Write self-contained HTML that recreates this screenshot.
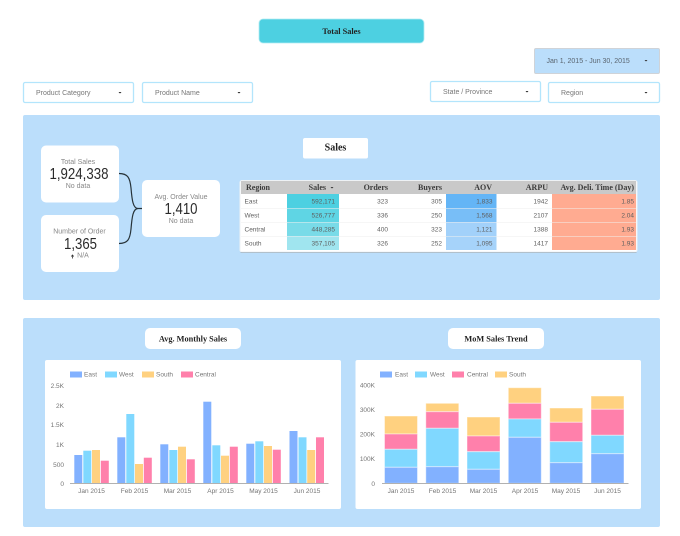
<!DOCTYPE html>
<html><head><meta charset="utf-8">
<style>
html,body{margin:0;padding:0;background:#fff}
body{width:680px;height:536px;overflow:hidden;position:relative}
svg{position:absolute;left:0;top:0;filter:blur(.35px)}
text{font-family:"Liberation Sans",sans-serif;fill:#757575}
.t{font-family:"Liberation Serif",serif;font-weight:bold;fill:#222}
.c{fill:#5f5f5f;font-size:6.5px;text-anchor:end}
.h{font-family:"Liberation Serif",serif;font-weight:bold;fill:#3c3c3c;font-size:8px;text-anchor:end}
.dd{fill:#fff;stroke:#b3e5fc;stroke-width:1.3}
.ddt{font-size:7px;fill:#777}
.ax{font-size:6.5px;fill:#757575;text-anchor:end}
.mo{font-size:6.5px;fill:#757575;text-anchor:middle}
.lg{font-size:6.5px;fill:#777}
.lab{font-size:7px;fill:#888;text-anchor:middle}
.val{font-size:15.5px;fill:#2a2a2a}
.sub{font-size:7px;fill:#888;text-anchor:middle}
.E{fill:#82b1ff}.W{fill:#80d8ff}.S{fill:#ffd180}.C{fill:#ff80ab}
.st rect{stroke:#fff;stroke-opacity:.45;stroke-width:1}
</style></head><body>
<svg width="680" height="536" viewBox="0 0 680 536" xmlns="http://www.w3.org/2000/svg">
<!-- header -->
<rect x="259" y="19" width="165" height="24" rx="4" fill="#4dd0e1" stroke="#b2ebf2" stroke-width=".8"/>
<text class="t" x="341.500" y="34" font-size="8.300" text-anchor="middle">Total Sales</text>
<rect x="534.500" y="48.500" width="125" height="25" rx="1.500" fill="#bbdefb" stroke="#cfd3d8" stroke-width="1"/>
<text x="546.500" y="63" font-size="7" style="fill:#5a6570">Jan 1, 2015 - Jun 30, 2015</text>
<path d="M644.500 60h3l-1.500 1.500z" fill="#333"/>
<!-- dropdowns -->
<rect class="dd" x="23.500" y="82.500" width="110" height="20" rx="1.500"/>
<text class="ddt" x="36" y="95">Product Category</text><path d="M118.500 92h3l-1.500 1.500z" fill="#222"/>
<rect class="dd" x="142.500" y="82.500" width="110" height="20" rx="1.500"/>
<text class="ddt" x="155" y="95">Product Name</text><path d="M237.500 92h3l-1.500 1.500z" fill="#222"/>
<rect class="dd" x="430.500" y="81.500" width="110" height="20" rx="1.500"/>
<text class="ddt" x="443" y="94">State / Province</text><path d="M525.500 91h3l-1.500 1.500z" fill="#222"/>
<rect class="dd" x="548.500" y="82.500" width="111" height="20" rx="1.500"/>
<text class="ddt" x="561" y="95">Region</text><path d="M644.500 92h3l-1.500 1.500z" fill="#222"/>
<!-- panel 1 -->
<rect x="23" y="115" width="637" height="185" rx="2" fill="#bbdefb"/>
<rect x="303" y="138" width="65" height="20.500" rx="2" fill="#fff"/>
<text class="t" x="335.500" y="150.500" font-size="10" text-anchor="middle">Sales</text>
<!-- scorecards -->
<path d="M119 173.500C128 173.500 130 178 131 188C132 200 133 208.500 138 208.500M119 243.500C128 243.500 130 239 131 229C132 217 133 208.500 138 208.500M138 208.500H142" fill="none" stroke="#263238" stroke-width="1.200"/>
<rect x="41" y="145.500" width="78" height="57" rx="5" fill="#fff"/>
<text class="lab" x="78" y="164">Total Sales</text>
<text class="val" x="49.500" y="179" textLength="59" lengthAdjust="spacingAndGlyphs">1,924,338</text>
<text class="sub" x="78" y="188">No data</text>
<rect x="41" y="215" width="78" height="57" rx="5" fill="#fff"/>
<text class="lab" x="79.500" y="233.500">Number of Order</text>
<text class="val" x="64" y="249" textLength="33" lengthAdjust="spacingAndGlyphs">1,365</text>
<path d="M72.500 258.500v-3M71.300 256.500l1.200-1.500 1.200 1.500" stroke="#333" stroke-width=".8" fill="none"/>
<text class="sub" x="83" y="257.500">N/A</text>
<rect x="142" y="180" width="78" height="57" rx="5" fill="#fff"/>
<text class="lab" x="181" y="199">Avg. Order Value</text>
<text class="val" x="164.500" y="214" textLength="33" lengthAdjust="spacingAndGlyphs">1,410</text>
<text class="sub" x="181" y="223">No data</text>
<!-- table -->
<rect x="240" y="180.500" width="397" height="71.500" rx="2" fill="#fff" stroke="#eef2f5" stroke-width="1"/>
<rect x="240.500" y="252" width="396" height="1" fill="#9aa5ae" opacity=".6"/>
<rect x="241" y="181" width="395" height="13" fill="#c9c9c9"/>
<g stroke="#f0f0f0" stroke-width=".7"><path d="M241 208.300H636M241 222.300H636M241 236.300H636"/></g>
<rect x="287" y="194" width="52" height="14" fill="#4dd0e1"/>
<rect x="287" y="208.500" width="52" height="13.500" fill="#5fd5e4"/>
<rect x="287" y="222.500" width="52" height="13.500" fill="#79dbe8"/>
<rect x="287" y="236.500" width="52" height="13.500" fill="#a0e5ef"/>
<rect x="446" y="194" width="50.500" height="14" fill="#64b5f6"/>
<rect x="446" y="208.500" width="50.500" height="13.500" fill="#78bef7"/>
<rect x="446" y="222.500" width="50.500" height="13.500" fill="#a2d1fa"/>
<rect x="446" y="236.500" width="50.500" height="13.500" fill="#a6d3fa"/>
<rect x="552" y="194" width="84" height="14" fill="#ffab91"/>
<rect x="552" y="208.500" width="84" height="13.500" fill="#ffab91"/>
<rect x="552" y="222.500" width="84" height="13.500" fill="#ffab91"/>
<rect x="552" y="236.500" width="84" height="13.500" fill="#ffab91"/>
<text class="h" x="270" y="190">Region</text>
<text class="h" x="326" y="190">Sales</text><path d="M330.500 187h3l-1.500 1.500z" fill="#333"/>
<text class="h" x="388" y="190">Orders</text>
<text class="h" x="442" y="190">Buyers</text>
<text class="h" x="492" y="190">AOV</text>
<text class="h" x="548" y="190">ARPU</text>
<text class="h" x="634" y="190">Avg. Deli. Time (Day)</text>
<g>
<text class="c" x="244.500" y="203.500" style="text-anchor:start">East</text>
<text class="c" x="335" y="203.500">592,171</text><text class="c" x="388" y="203.500">323</text><text class="c" x="442" y="203.500">305</text><text class="c" x="492.500" y="203.500">1,833</text><text class="c" x="548" y="203.500">1942</text><text class="c" x="634" y="203.500">1.85</text>
<text class="c" x="244.500" y="217.500" style="text-anchor:start">West</text>
<text class="c" x="335" y="217.500">526,777</text><text class="c" x="388" y="217.500">336</text><text class="c" x="442" y="217.500">250</text><text class="c" x="492.500" y="217.500">1,568</text><text class="c" x="548" y="217.500">2107</text><text class="c" x="634" y="217.500">2.04</text>
<text class="c" x="244.500" y="231.500" style="text-anchor:start">Central</text>
<text class="c" x="335" y="231.500">448,285</text><text class="c" x="388" y="231.500">400</text><text class="c" x="442" y="231.500">323</text><text class="c" x="492.500" y="231.500">1,121</text><text class="c" x="548" y="231.500">1388</text><text class="c" x="634" y="231.500">1.93</text>
<text class="c" x="244.500" y="245.500" style="text-anchor:start">South</text>
<text class="c" x="335" y="245.500">357,105</text><text class="c" x="388" y="245.500">326</text><text class="c" x="442" y="245.500">252</text><text class="c" x="492.500" y="245.500">1,095</text><text class="c" x="548" y="245.500">1417</text><text class="c" x="634" y="245.500">1.93</text>
</g>
<!-- panel 2 -->
<rect x="23" y="318" width="637" height="209" rx="2" fill="#bbdefb"/>
<rect x="145" y="328" width="96" height="21" rx="5" fill="#fff"/>
<text class="t" x="193" y="341.500" font-size="8.300" text-anchor="middle">Avg. Monthly Sales</text>
<rect x="448" y="328" width="96" height="21" rx="5" fill="#fff"/>
<text class="t" x="496" y="341.500" font-size="8.300" text-anchor="middle">MoM Sales Trend</text>
<!-- chart 1 -->
<rect x="45" y="360" width="296" height="149" rx="2" fill="#fff"/>
<rect class="E" x="70" y="371.500" width="12" height="6"/><text class="lg" x="84" y="376.500">East</text>
<rect class="W" x="105" y="371.500" width="12" height="6"/><text class="lg" x="119" y="376.500">West</text>
<rect class="S" x="142" y="371.500" width="12" height="6"/><text class="lg" x="156" y="376.500">South</text>
<rect class="C" x="181" y="371.500" width="12" height="6"/><text class="lg" x="195" y="376.500">Central</text>
<text class="ax" x="64" y="388">2.5K</text><text class="ax" x="64" y="408">2K</text><text class="ax" x="64" y="427">1.5K</text><text class="ax" x="64" y="447">1K</text><text class="ax" x="64" y="467">500</text><text class="ax" x="64" y="486">0</text>
<g>
<rect class="E" x="74.300" y="455" width="8" height="28.500"/><rect class="W" x="83.300" y="450.700" width="8" height="32.800"/><rect class="S" x="92" y="450" width="8" height="33.500"/><rect class="C" x="100.800" y="460.700" width="8" height="22.800"/>
<rect class="E" x="117.300" y="437.300" width="8" height="46.200"/><rect class="W" x="126.300" y="414" width="8" height="69.500"/><rect class="S" x="135" y="464" width="8" height="19.500"/><rect class="C" x="143.800" y="457.700" width="8" height="25.800"/>
<rect class="E" x="160.300" y="444.300" width="8" height="39.200"/><rect class="W" x="169.300" y="450" width="8" height="33.500"/><rect class="S" x="178" y="446.700" width="8" height="36.800"/><rect class="C" x="186.800" y="459.300" width="8" height="24.200"/>
<rect class="E" x="203.300" y="401.700" width="8" height="81.800"/><rect class="W" x="212.300" y="445.300" width="8" height="38.200"/><rect class="S" x="221" y="455.700" width="8" height="27.800"/><rect class="C" x="229.800" y="446.700" width="8" height="36.800"/>
<rect class="E" x="246.300" y="443.700" width="8" height="39.800"/><rect class="W" x="255.300" y="441.300" width="8" height="42.200"/><rect class="S" x="264" y="446" width="8" height="37.500"/><rect class="C" x="272.800" y="449.700" width="8" height="33.800"/>
<rect class="E" x="289.500" y="431" width="8" height="52.500"/><rect class="W" x="298.500" y="437.300" width="8" height="46.200"/><rect class="S" x="307.200" y="450" width="8" height="33.500"/><rect class="C" x="316" y="437.300" width="8" height="46.200"/>
</g>
<rect x="70" y="483" width="258.500" height=".8" fill="#9e9e9e"/>
<text class="mo" x="91.500" y="493">Jan 2015</text><text class="mo" x="134.500" y="493">Feb 2015</text><text class="mo" x="177.500" y="493">Mar 2015</text><text class="mo" x="220.500" y="493">Apr 2015</text><text class="mo" x="263.500" y="493">May 2015</text><text class="mo" x="307" y="493">Jun 2015</text>
<!-- chart 2 -->
<rect x="355.500" y="360" width="285.500" height="149" rx="2" fill="#fff"/>
<rect class="E" x="380" y="371.500" width="12" height="6"/><text class="lg" x="395" y="376.500">East</text>
<rect class="W" x="415" y="371.500" width="12" height="6"/><text class="lg" x="430" y="376.500">West</text>
<rect class="C" x="452" y="371.500" width="12" height="6"/><text class="lg" x="467" y="376.500">Central</text>
<rect class="S" x="495" y="371.500" width="12" height="6"/><text class="lg" x="509" y="376.500">South</text>
<text class="ax" x="375" y="387.500">400K</text><text class="ax" x="375" y="412">300K</text><text class="ax" x="375" y="436.500">200K</text><text class="ax" x="375" y="461">100K</text><text class="ax" x="375" y="486">0</text>
<g class="st">
<rect class="S" x="384.500" y="416" width="33" height="18"/><rect class="C" x="384.500" y="434" width="33" height="15.300"/><rect class="W" x="384.500" y="449.300" width="33" height="18"/><rect class="E" x="384.500" y="467.300" width="33" height="16"/>
<rect class="S" x="425.800" y="403.300" width="33" height="8.400"/><rect class="C" x="425.800" y="411.700" width="33" height="16.600"/><rect class="W" x="425.800" y="428.300" width="33" height="38.400"/><rect class="E" x="425.800" y="466.700" width="33" height="16.600"/>
<rect class="S" x="467" y="417" width="33" height="19"/><rect class="C" x="467" y="436" width="33" height="15.700"/><rect class="W" x="467" y="451.700" width="33" height="17.600"/><rect class="E" x="467" y="469.300" width="33" height="14"/>
<rect class="S" x="508.300" y="387.700" width="33" height="15.600"/><rect class="C" x="508.300" y="403.300" width="33" height="15.700"/><rect class="W" x="508.300" y="419" width="33" height="18.300"/><rect class="E" x="508.300" y="437.300" width="33" height="46"/>
<rect class="S" x="549.700" y="408" width="33" height="14.300"/><rect class="C" x="549.700" y="422.300" width="33" height="19.400"/><rect class="W" x="549.700" y="441.700" width="33" height="21"/><rect class="E" x="549.700" y="462.700" width="33" height="20.600"/>
<rect class="S" x="591" y="396" width="33" height="13.300"/><rect class="C" x="591" y="409.300" width="33" height="26"/><rect class="W" x="591" y="435.300" width="33" height="18.400"/><rect class="E" x="591" y="453.700" width="33" height="29.600"/>
</g>
<rect x="382" y="483" width="246.500" height=".8" fill="#9e9e9e"/>
<text class="mo" x="401" y="493">Jan 2015</text><text class="mo" x="442.500" y="493">Feb 2015</text><text class="mo" x="483.500" y="493">Mar 2015</text><text class="mo" x="525" y="493">Apr 2015</text><text class="mo" x="566" y="493">May 2015</text><text class="mo" x="607.500" y="493">Jun 2015</text>
</svg>
</body></html>
